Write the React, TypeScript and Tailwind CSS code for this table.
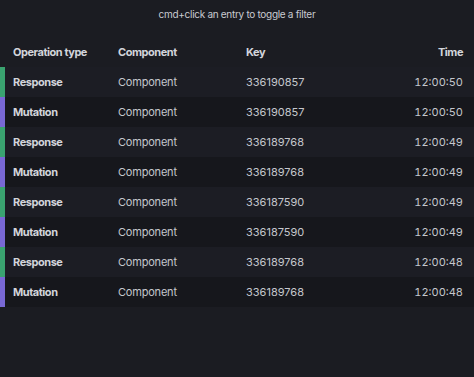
const rows = [
  { type: 'Response', key: '336190857', time: '12:00:50' },
  { type: 'Mutation', key: '336190857', time: '12:00:50' },
  { type: 'Response', key: '336189768', time: '12:00:49' },
  { type: 'Mutation', key: '336189768', time: '12:00:49' },
  { type: 'Response', key: '336187590', time: '12:00:49' },
  { type: 'Mutation', key: '336187590', time: '12:00:49' },
  { type: 'Response', key: '336189768', time: '12:00:48' },
  { type: 'Mutation', key: '336189768', time: '12:00:48' },
]

export default function App() {
  return (
    <div
      className="w-[474px] h-[377px] bg-[#1b1c22] text-[11px] text-[#c5c7cd] overflow-hidden"
      style={{ fontFamily: 'Inter, "Noto Sans", sans-serif' }}
    >
      <div className="h-[28px] flex items-center justify-center text-[10px] tracking-[-0.3px] text-[#c9cbd1]">
        cmd+click an entry to toggle a filter
      </div>
      <div className="mt-[9px]">
        <div className="flex items-center h-[30px] pl-[13px] pr-[11px] font-bold tracking-[-0.45px] text-[#d3d5db]">
          <div className="w-[105px]">Operation type</div>
          <div className="w-[128px]">Component</div>
          <div className="flex-1">Key</div>
          <div>Time</div>
        </div>
        {rows.map((r, i) => {
          const isResponse = r.type === 'Response'
          return (
            <div
              key={i}
              className={
                'flex items-center h-[30px] pl-2 pr-[11px] border-l-[5px] ' +
                (isResponse ? 'border-[#3aa370] bg-[#1c1d24]' : 'border-[#7868d4] bg-[#16171c]')
              }
            >
              <div className="w-[105px] font-bold tracking-[-0.45px] text-[#d3d5db]">{r.type}</div>
              <div className="w-[128px] tracking-[-0.2px]">Component</div>
              <div className="flex-1">{r.key}</div>
              <div className="tabular-nums">{r.time}</div>
            </div>
          )
        })}
      </div>
    </div>
  )
}
